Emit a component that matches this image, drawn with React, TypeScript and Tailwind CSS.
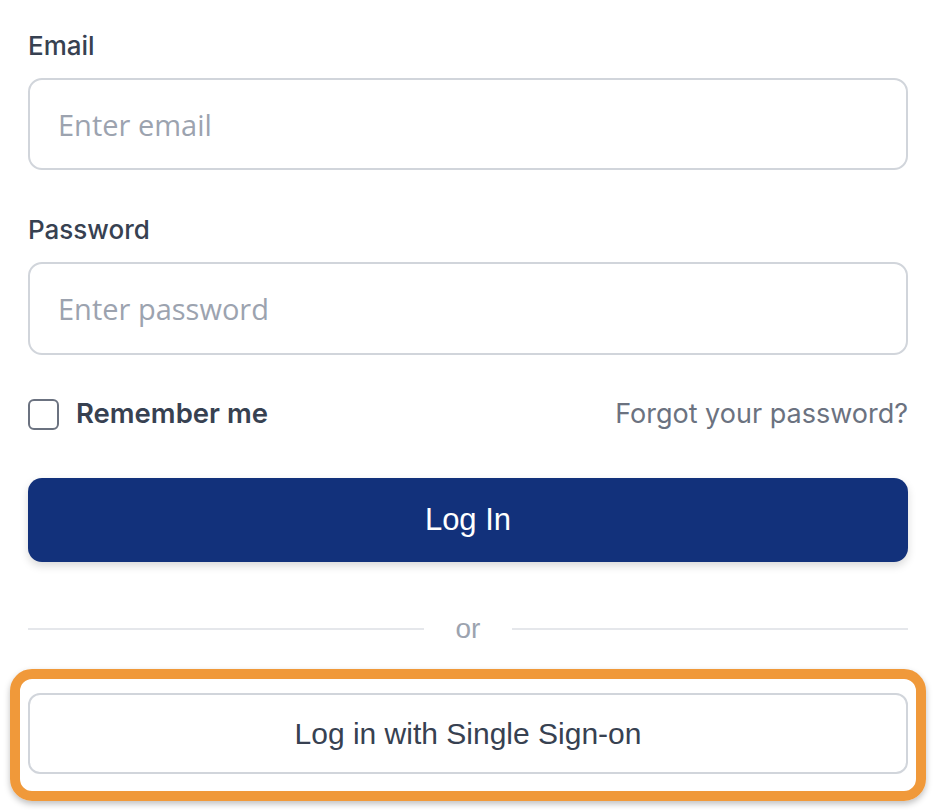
import { useState } from 'react';

export default function App() {
  const [remember, setRemember] = useState(false);

  return (
    <div className="min-h-screen bg-white px-[28px] pt-[29px]" style={{ fontFamily: 'Inter, "Noto Sans", sans-serif' }}>
      {/* Email */}
      <label className="block text-[26px] leading-[34px] font-medium text-[#374151]">Email</label>
      <input
        type="email"
        placeholder="Enter email"
        className="mt-[15px] block w-full h-[92px] rounded-[14px] border-2 border-[#d1d5db] px-[28px] text-[29px] text-[#374151] placeholder:text-[#9ca3af] outline-none"
        style={{ fontFamily: '"Open Sans", sans-serif' }}
      />

      {/* Password */}
      <label className="mt-[43px] block text-[26px] leading-[34px] font-medium text-[#374151]">Password</label>
      <input
        type="password"
        placeholder="Enter password"
        className="mt-[15px] block w-full h-[93px] rounded-[14px] border-2 border-[#d1d5db] px-[28px] text-[29px] text-[#374151] placeholder:text-[#9ca3af] outline-none"
        style={{ fontFamily: '"Open Sans", sans-serif' }}
      />

      {/* Remember / forgot */}
      <div className="mt-[43px] flex items-center justify-between h-[32px]">
        <label className="flex items-center gap-[17px] cursor-pointer">
          <span
            onClick={() => setRemember(!remember)}
            className="block w-[31px] h-[31px] rounded-[6px] border-2 border-[#6b7280] bg-white"
          />
          <span className="text-[27.5px] font-semibold text-[#374151]">Remember me</span>
        </label>
        <a className="text-[27px] text-[#6b7280]">Forgot your password?</a>
      </div>

      {/* Log in */}
      <button
        className="mt-[48px] block w-full h-[84px] rounded-[14px] bg-[#12317b] text-white text-[31px] shadow-[0_4px_8px_rgba(0,0,0,0.15)]"
        style={{ fontFamily: '"Liberation Sans", Arial, sans-serif' }}
      >
        Log In
      </button>

      {/* Divider */}
      <div className="mt-[51px] flex items-center h-[32px]" style={{ fontFamily: '"Liberation Sans", Arial, sans-serif' }}>
        <div className="flex-1 h-[2px] bg-[#e5e7eb]" />
        <span className="px-[32px] text-[28px] text-[#9ca3af] leading-none">or</span>
        <div className="flex-1 h-[2px] bg-[#e5e7eb]" />
      </div>

      {/* SSO, highlighted */}
      <div className="mt-[24px] -mx-[18px] rounded-[22px] border-[10px] border-[#f0993a] px-[8px] pt-[14px] pb-[17px] shadow-[0_3px_6px_rgba(0,0,0,0.25)]">
        <button
          className="block w-full h-[81px] rounded-[12px] border-2 border-[#d1d5db] bg-white text-[30px] text-[#374151]"
          style={{ fontFamily: '"Liberation Sans", Arial, sans-serif' }}
        >
          Log in with Single Sign-on
        </button>
      </div>
    </div>
  );
}
